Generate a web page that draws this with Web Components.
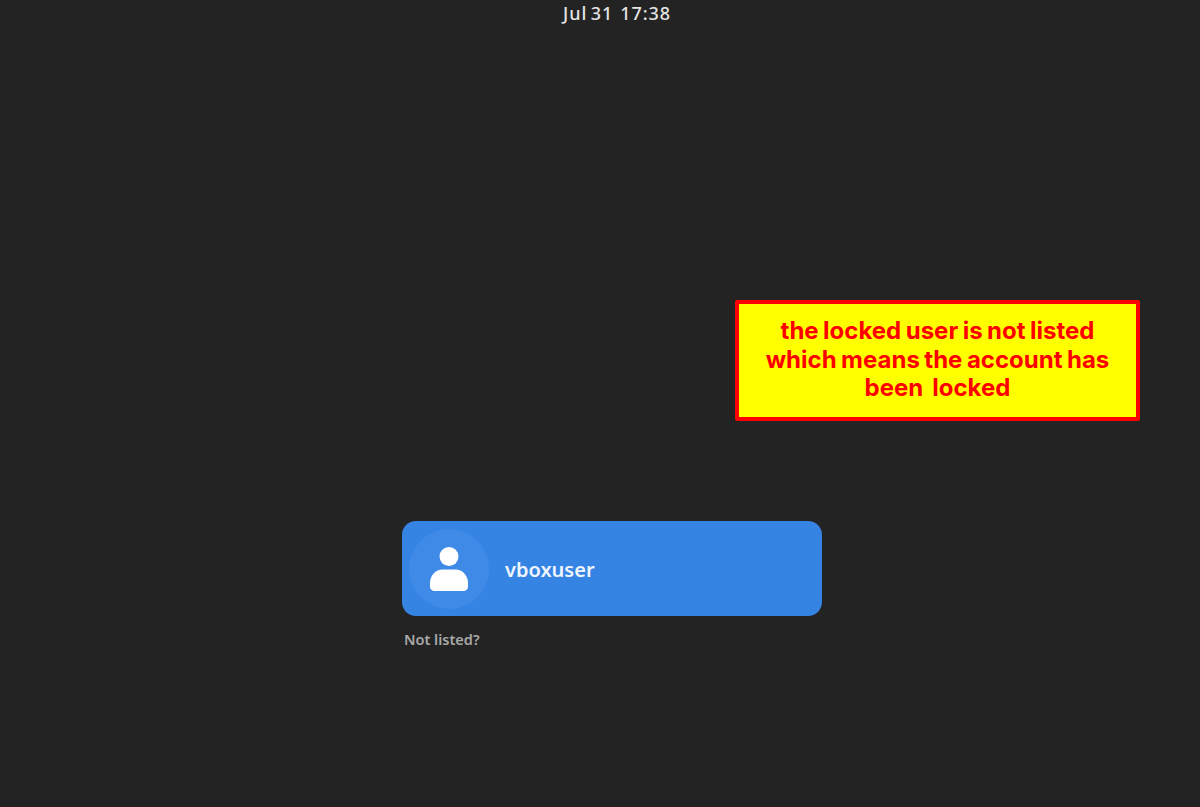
<!DOCTYPE html>
<html>
<head>
<meta charset="utf-8">
<title>Login</title>
<style>
    html, body {
        margin: 0;
        height: 100%;
        background: #232323;
    }
    body {
        overflow: hidden;
        font-family: "Noto Sans", sans-serif;
    }
</style>
</head>
<body>
<login-screen>
    <top-clock slot="top">Jul 31&nbsp;&nbsp;17:38</top-clock>
    <note-box slot="note">the locked user is not listed<br>which means the account has<br>been&nbsp;&nbsp;locked</note-box>
    <user-button>vboxuser</user-button>
    <not-listed>Not listed?</not-listed>
</login-screen>

<script>
class LoginScreen extends HTMLElement {
    constructor() {
        super();
        this.attachShadow({ mode: 'open' });
        this.shadowRoot.innerHTML = `
        <style>
            :host {
                display: flex;
                flex-direction: column;
                position: relative;
                height: 807px;
                width: 1200px;
                background: #232323;
            }
            .list {
                display: flex;
                flex-direction: column;
                gap: 14px;
                width: 420px;
                margin: 494px 0 0 402px;
            }
        </style>
        <slot name="top"></slot>
        <div class="list"><slot></slot></div>
        <slot name="note"></slot>
        `;
    }
}

class TopClock extends HTMLElement {
    constructor() {
        super();
        this.attachShadow({ mode: 'open' });
        this.shadowRoot.innerHTML = `
        <style>
            :host {
                display: block;
                height: 27px;
                padding-left: 34px;
                text-align: center;
                color: #e4e4e4;
                font: 500 18px/27px "Noto Sans", sans-serif;
                letter-spacing: 0.900px;
                word-spacing: -2px;
            }
        </style>
        <slot></slot>
        `;
    }
}

class UserButton extends HTMLElement {
    constructor() {
        super();
        this.attachShadow({ mode: 'open' });
        this.shadowRoot.innerHTML = `
        <style>
            :host {
                display: flex;
                align-items: center;
                gap: 16px;
                box-sizing: border-box;
                height: 95px;
                padding: 0 7px;
                border-radius: 14px;
                background: #3584e4;
                color: #eef5fd;
                font: 600 20px "Noto Sans", sans-serif;
            }
            .avatar {
                flex: none;
                display: flex;
                align-items: center;
                justify-content: center;
                width: 80px;
                height: 80px;
                border-radius: 50%;
                background: #3f8ae6;
            }
            svg {
                display: block;
                width: 40px;
                height: 46px;
            }
            span {
                padding-top: 2px;
            }
        </style>
        <div class="avatar">
            <svg viewBox="0 0 40 46" fill="#fff">
                <circle cx="20" cy="10.5" r="9.5"/>
                <path d="M13.500 23.500h13c7 0 12.500 6 12.500 13.500v3.500c0 2.800-2 4.500-4.500 4.500h-29c-2.500 0-4.500-1.700-4.500-4.500v-3.500c0-7.500 5.500-13.500 12.500-13.500z"/>
            </svg>
        </div>
        <span><slot></slot></span>
        `;
    }
}

class NotListed extends HTMLElement {
    constructor() {
        super();
        this.attachShadow({ mode: 'open' });
        this.shadowRoot.innerHTML = `
        <style>
            :host {
                display: block;
                padding-left: 2px;
                color: #a8a8a8;
                font: 600 14.500px/18px "Noto Sans", sans-serif;
            }
        </style>
        <slot></slot>
        `;
    }
}

// the annotation sits over the screenshot, so it is placed by hand
class NoteBox extends HTMLElement {
    constructor() {
        super();
        this.attachShadow({ mode: 'open' });
        this.shadowRoot.innerHTML = `
        <style>
            :host {
                position: absolute;
                left: 735px;
                top: 300px;
                box-sizing: border-box;
                width: 405px;
                height: 121px;
                padding-top: 13px;
                border: 4px solid #ff0000;
                border-radius: 2px;
                background: #ffff00;
                color: #ff0000;
                text-align: center;
                font: 700 24px/28.500px Inter, sans-serif;
                word-spacing: -1.200px;
            }
        </style>
        <slot></slot>
        `;
    }
}

customElements.define('login-screen', LoginScreen);
customElements.define('top-clock', TopClock);
customElements.define('user-button', UserButton);
customElements.define('not-listed', NotListed);
customElements.define('note-box', NoteBox);
</script>
</body>
</html>
